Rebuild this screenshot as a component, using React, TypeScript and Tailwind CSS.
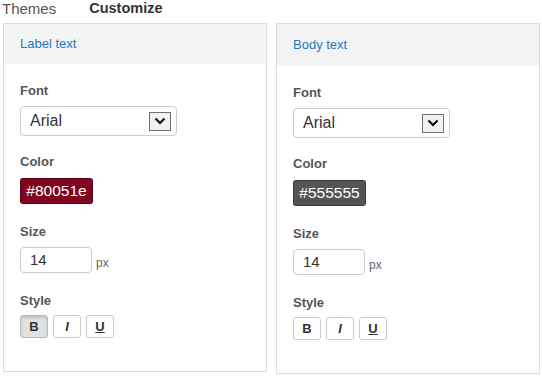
type PanelProps = {
  title: string;
  color: string;
  swatch: string;
  bold?: boolean;
  tall?: boolean;
};

function Chevron() {
  return (
    <span className="flex h-[19px] w-[22px] items-center justify-center border border-[#707070] bg-[#f2f2f2]">
      <svg width="12" height="8" viewBox="0 0 12 8">
        <path d="M1.5 1.5 L6 6 L10.5 1.5" fill="none" stroke="#000" strokeWidth="2" />
      </svg>
    </span>
  );
}

function Label({ children }: { children: string }) {
  return <div className="text-[13px] font-bold leading-4 text-[#555]">{children}</div>;
}

function Panel({ title, color, swatch, bold, tall }: PanelProps) {
  return (
    <div className="flex w-[264px] flex-col border border-[#dcdcdc]">
      <div
        className={`flex items-center bg-[#f3f3f3] px-4 text-[13px] text-[#1f78c8] ${
          tall ? "h-[42px]" : "h-[40px]"
        }`}
      >
        {title}
      </div>
      <div className="flex flex-col px-4 pb-[33px] pt-[19px]">
        <Label>Font</Label>
        <div className="mt-[7px] flex h-[30px] w-[157px] items-center justify-between rounded-[4px] border border-[#ccc] bg-white pl-[9px] pr-[5px] text-[16px] text-[#333]">
          <span>Arial</span>
          <Chevron />
        </div>

        <div className="mt-[18px]">
          <Label>Color</Label>
        </div>
        <div
          className="mt-[8px] flex h-[26px] w-[73px] items-center justify-center rounded-[3px] border border-black/30 text-[15.5px] text-white"
          style={{ backgroundColor: color }}
        >
          {swatch}
        </div>

        <div className="mt-[20px]">
          <Label>Size</Label>
        </div>
        <div className="mt-[7px] flex items-end gap-[4px]">
          <div className="flex h-[26px] w-[72px] items-center rounded-[4px] border border-[#ccc] pl-[9px] text-[15px] text-[#333]">
            14
          </div>
          <span className="pb-[1px] text-[12px] text-[#666]">px</span>
        </div>

        <div className="mt-[20px]">
          <Label>Style</Label>
        </div>
        <div className="mt-[6px] flex gap-[5px]">
          <button
            type="button"
            className={`flex h-[23px] w-[28px] items-center justify-center rounded-[3px] border text-[13px] font-bold text-[#333] ${
              bold
                ? "border-[#b8b8b8] bg-[#e2e2e2] shadow-[inset_0_2px_3px_rgba(0,0,0,0.15)]"
                : "border-[#ccc] bg-white"
            }`}
          >
            B
          </button>
          <button
            type="button"
            className="flex h-[23px] w-[28px] items-center justify-center rounded-[3px] border border-[#ccc] bg-white text-[13px] font-bold italic text-[#333]"
          >
            I
          </button>
          <button
            type="button"
            className="flex h-[23px] w-[28px] items-center justify-center rounded-[3px] border border-[#ccc] bg-white text-[13px] font-bold text-[#333] underline"
          >
            U
          </button>
        </div>
      </div>
    </div>
  );
}

export default function App() {
  return (
    <div
      className="h-[379px] w-[542px] bg-white"
      style={{ fontFamily: '"Liberation Sans", Arial, sans-serif' }}
    >
      <div className="flex h-[23px] items-start pl-[2px] text-[15px] leading-[17px]">
        <span className="text-[#555]">Themes</span>
        <span className="ml-[33px] text-[14.5px] font-bold text-[#333]">Customize</span>
      </div>
      <div className="flex items-start gap-[9px] pl-[3px]">
        <Panel title="Label text" color="#80051e" swatch="#80051e" bold />
        <Panel title="Body text" color="#555555" swatch="#555555" tall />
      </div>
    </div>
  );
}
